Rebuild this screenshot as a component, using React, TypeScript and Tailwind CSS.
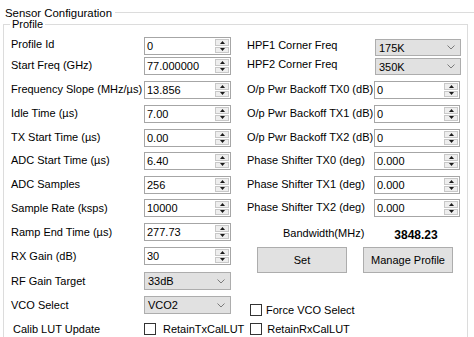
import React from 'react';

function Spinner() {
  return (
    <div className="flex flex-col w-[14px] h-full gap-[1px]">
      <div className="flex-1 flex items-center justify-center bg-[#eeeeee] border border-[#c8c8c8]">
        <svg width="5" height="3" viewBox="0 0 5 3">
          <path d="M2.5 0 L5 3 L0 3 Z" fill="#1a1a1a" />
        </svg>
      </div>
      <div className="flex-1 flex items-center justify-center bg-[#eeeeee] border border-[#c8c8c8]">
        <svg width="5" height="3" viewBox="0 0 5 3">
          <path d="M0 0 L5 0 L2.5 3 Z" fill="#1a1a1a" />
        </svg>
      </div>
    </div>
  );
}

function NumBox({ value, w = 'w-[87px]' }: { value: string; w?: string }) {
  return (
    <div className={`${w} h-[18px] shrink-0 flex items-center bg-white border border-[#a6a6a6] pl-[2px] pr-[1px] py-[1px]`}>
      <span className="flex-1">{value}</span>
      <Spinner />
    </div>
  );
}

function Combo({ value, w = 'w-[87px]', h = 'h-[17px]' }: { value: string; w?: string; h?: string }) {
  return (
    <div className={`${w} ${h} shrink-0 flex items-center justify-between bg-[#e1e1e1] border border-[#adadad] pl-[3px] pr-[5px]`}>
      <span>{value}</span>
      <svg width="8" height="5" viewBox="0 0 8 5">
        <path d="M0.5 0.5 L4 4 L7.5 0.5" fill="none" stroke="#7a7a7a" strokeWidth="1" />
      </svg>
    </div>
  );
}

function Check() {
  return <div className="w-[12px] h-[12px] shrink-0 bg-white border border-[#333333]" />;
}

// pb lifts the label a little above the box centre, as in the upper rows of the form
const leftRows: { label: string; value: string; mt: string; pb: string }[] = [
  { label: 'Profile Id', value: '0', mt: 'mt-[6px]', pb: 'pb-[4px]' },
  { label: 'Start Freq (GHz)', value: '77.000000', mt: 'mt-[2px]', pb: 'pb-[3px]' },
  { label: 'Frequency Slope (MHz/µs)', value: '13.856', mt: 'mt-[6px]', pb: 'pb-[2px]' },
  { label: 'Idle Time (µs)', value: '7.00', mt: 'mt-[6px]', pb: 'pb-[2px]' },
  { label: 'TX Start Time (µs)', value: '0.00', mt: 'mt-[6px]', pb: 'pb-[2px]' },
  { label: 'ADC Start Time (µs)', value: '6.40', mt: 'mt-[5px]', pb: 'pb-[2px]' },
  { label: 'ADC Samples', value: '256', mt: 'mt-[6px]', pb: 'pb-[2px]' },
  { label: 'Sample Rate (ksps)', value: '10000', mt: 'mt-[5px]', pb: 'pb-[1px]' },
  { label: 'Ramp End Time (µs)', value: '277.73', mt: 'mt-[6px]', pb: 'pb-[1px]' },
  { label: 'RX Gain (dB)', value: '30', mt: 'mt-[6px]', pb: 'pb-0' },
];

const rightRows: { label: string; value: string; mt: string }[] = [
  { label: 'O/p Pwr Backoff TX0 (dB)', value: '0', mt: 'mt-[6px]' },
  { label: 'O/p Pwr Backoff TX1 (dB)', value: '0', mt: 'mt-[6px]' },
  { label: 'O/p Pwr Backoff TX2 (dB)', value: '0', mt: 'mt-[6px]' },
  { label: 'Phase Shifter TX0 (deg)', value: '0.000', mt: 'mt-[5px]' },
  { label: 'Phase Shifter TX1 (deg)', value: '0.000', mt: 'mt-[6px]' },
  { label: 'Phase Shifter TX2 (deg)', value: '0.000', mt: 'mt-[5px]' },
];

export default function App() {
  return (
    <div className="w-[474px] h-[337px] overflow-hidden bg-white text-black font-['Liberation_Sans',Arial,sans-serif] text-[11px] leading-[14px]">
      {/* Sensor Configuration header */}
      <div className="flex items-center h-[14px] mt-[6px] pl-[5px]">
        <span className="whitespace-nowrap text-[11.4px]">Sensor Configuration</span>
        <div className="ml-[3px] flex-1 h-px bg-[#dcdcdc] mb-[1px]" />
      </div>

      <fieldset className="-mt-[3px] ml-[3px] w-[465px] h-[340px] border border-[#dcdcdc]">
        <legend className="ml-[6px] px-[2px] leading-[14px]">Profile</legend>

        <div className="flex items-start pl-[7px]">
          {/* left column */}
          <div className="flex flex-col w-[220px]">
            {leftRows.map((r) => (
              <div key={r.label} className={`flex items-center h-[18px] ${r.mt}`}>
                <span className={`w-[133px] shrink-0 whitespace-nowrap ${r.pb}`}>{r.label}</span>
                <NumBox value={r.value} />
              </div>
            ))}
            <div className="flex items-center h-[18px] mt-[7px]">
              <span className="w-[133px] shrink-0">RF Gain Target</span>
              <Combo value="33dB" h="h-[18px]" />
            </div>
            <div className="flex items-center h-[18px] mt-[6px]">
              <span className="w-[133px] shrink-0">VCO Select</span>
              <Combo value="VCO2" h="h-[18px]" />
            </div>
          </div>

          {/* right column */}
          <div className="flex flex-col w-[213px] ml-[16px]">
            <div className="flex items-center h-[17px] mt-[8px]">
              <span className="w-[128px] shrink-0 whitespace-nowrap pb-[6px]">HPF1 Corner Freq</span>
              <Combo value="175K" w="w-[86px]" />
            </div>
            <div className="flex items-center h-[17px] mt-[2px]">
              <span className="w-[128px] shrink-0 whitespace-nowrap pb-[6px]">HPF2 Corner Freq</span>
              <Combo value="350K" w="w-[86px]" />
            </div>
            {rightRows.map((r) => (
              <div key={r.label} className={`flex items-center h-[18px] ${r.mt}`}>
                <span className="w-[127px] shrink-0 whitespace-nowrap pb-[2px]">{r.label}</span>
                <NumBox value={r.value} w="w-[86px]" />
              </div>
            ))}
            <div className="flex items-start h-[16px] mt-[9px] pl-[36px]">
              <span className="whitespace-nowrap">Bandwidth(MHz)</span>
              <span className="ml-[30px] mt-[2px] font-bold text-[12px]">3848.23</span>
            </div>
            <div className="flex mt-[5px] ml-[10px]">
              <button className="w-[90px] h-[26px] bg-[#e1e1e1] border border-[#adadad]">Set</button>
              <button className="w-[90px] h-[26px] ml-[16px] bg-[#e1e1e1] border border-[#adadad]">Manage Profile</button>
            </div>
            <div className="flex items-center h-[13px] mt-[30px] ml-[3px]">
              <Check />
              <span className="ml-[4px] whitespace-nowrap">Force VCO Select</span>
            </div>
          </div>
        </div>

        {/* Calib LUT row */}
        <div className="flex items-center h-[14px] mt-[6px] pl-[9px]">
          <span className="w-[131px] shrink-0 whitespace-nowrap">Calib LUT Update</span>
          <Check />
          <span className="ml-[7px] whitespace-nowrap">RetainTxCalLUT</span>
          <div className="ml-[6px]"><Check /></div>
          <span className="ml-[5px] whitespace-nowrap">RetainRxCalLUT</span>
        </div>
      </fieldset>
    </div>
  );
}
